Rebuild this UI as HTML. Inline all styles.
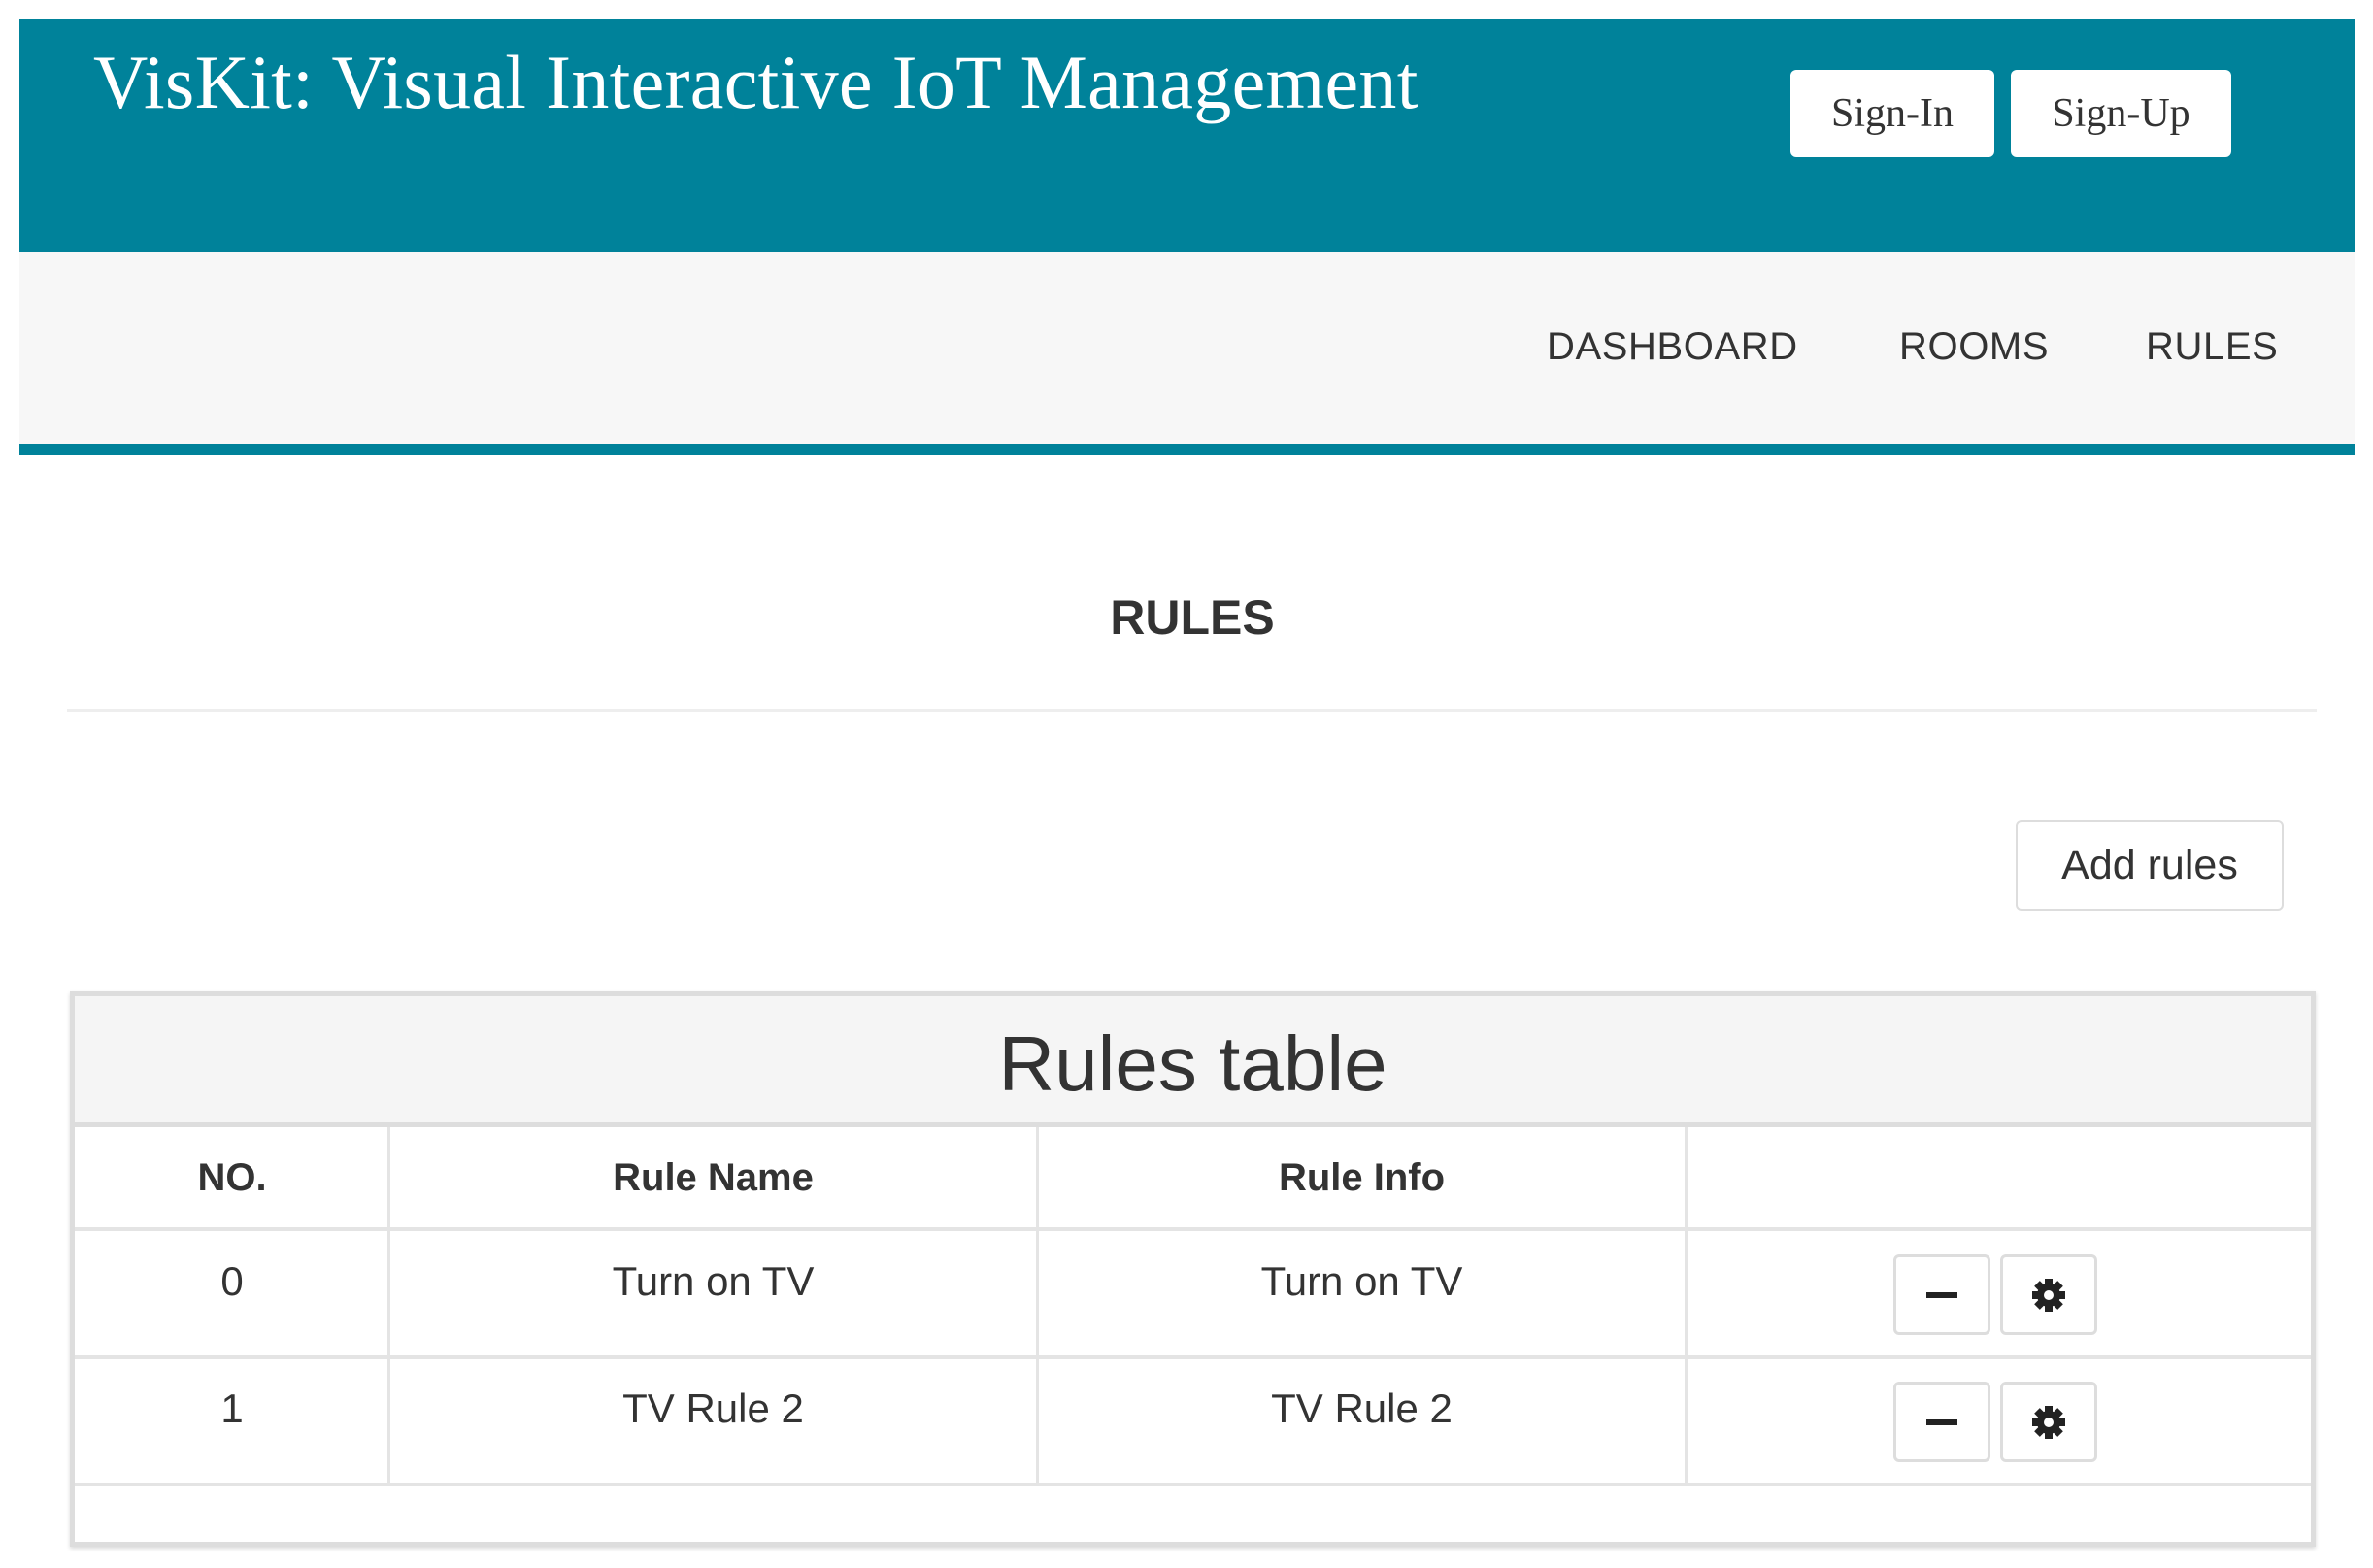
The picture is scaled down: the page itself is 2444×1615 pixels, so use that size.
<!DOCTYPE html>
<html><head><meta charset="utf-8"><style>
*{margin:0;padding:0;box-sizing:border-box}
body{width:2444px;height:1615px;background:#fff;position:relative;overflow:hidden;font-family:"Liberation Sans",sans-serif;color:#333}
.a{position:absolute}
.hdr{left:20px;top:20px;width:2405px;height:240px;background:#00829a}
.title{left:96px;top:40px;font-family:"Liberation Serif",serif;font-size:78px;color:#fff;white-space:nowrap;letter-spacing:0.3px}
.sbtn{background:#fff;border-radius:6px;font-family:"Liberation Serif",serif;font-size:42px;color:#333;display:flex;align-items:center;justify-content:center;top:72px;height:90px}
.nav{left:20px;top:260px;width:2405px;height:197px;background:#f7f7f7}
.navt{top:335px;font-size:40px;color:#333;letter-spacing:0.6px}
.line{left:20px;top:457px;width:2405px;height:12px;background:#00829a}
.h{left:0;width:2456px;text-align:center;top:607px;font-size:50px;font-weight:bold;color:#333}
.hr{left:69px;top:730px;width:2317px;height:3px;background:#eee}
.add{left:2076px;top:845px;width:276px;height:93px;border:2px solid #ddd;border-radius:6px;font-size:43px;display:flex;align-items:center;justify-content:center;color:#333}
.panel{left:72px;top:1021px;width:2313px;height:572px;border:5px solid #ddd;box-shadow:0 2px 4px rgba(0,0,0,.15);background:#fff}
.ph{left:77px;top:1026px;width:2303px;height:135px;background:#f5f5f5;border-bottom:5px solid #ddd;text-align:center;font-size:80px;line-height:140px;color:#333}
.vl{width:3px;background:#e4e4e4;top:1161px;height:368px}
.hl{left:77px;width:2303px;height:4px;background:#e4e4e4}
.c{font-size:42px;text-align:center;color:#333}
.b{font-weight:bold;font-size:40px}
.ib{width:100px;height:83px;border:3px solid #ddd;border-radius:6px;background:#fff;display:flex;align-items:center;justify-content:center}
</style></head><body>
<div class="a hdr"></div>
<div class="a title">VisKit: Visual Interactive IoT Management</div>
<div class="a sbtn" style="left:1844px;width:210px">Sign-In</div>
<div class="a sbtn" style="left:2071px;width:227px">Sign-Up</div>
<div class="a nav"></div>
<div class="a navt" style="left:1593px">DASHBOARD</div>
<div class="a navt" style="left:1956px">ROOMS</div>
<div class="a navt" style="left:2210px">RULES</div>
<div class="a line"></div>
<div class="a h">RULES</div>
<div class="a hr"></div>
<div class="a add">Add rules</div>
<div class="a panel"></div>
<div class="a ph">Rules table</div>
<div class="a vl" style="left:399px"></div>
<div class="a vl" style="left:1067px"></div>
<div class="a vl" style="left:1735px"></div>
<div class="a hl" style="top:1264px"></div>
<div class="a hl" style="top:1396px"></div>
<div class="a hl" style="top:1527px"></div>
<div class="a c b" style="left:78px;width:322px;top:1191px">NO.</div>
<div class="a c b" style="left:401px;width:667px;top:1191px">Rule Name</div>
<div class="a c b" style="left:1069px;width:667px;top:1191px">Rule Info</div>
<div class="a c" style="left:78px;width:322px;top:1296px">0</div>
<div class="a c" style="left:401px;width:667px;top:1296px">Turn on TV</div>
<div class="a c" style="left:1069px;width:667px;top:1296px">Turn on TV</div>
<div class="a c" style="left:78px;width:322px;top:1427px">1</div>
<div class="a c" style="left:401px;width:667px;top:1427px">TV Rule 2</div>
<div class="a c" style="left:1069px;width:667px;top:1427px">TV Rule 2</div>
<div class="a ib" style="left:1950px;top:1292px"><div style="width:32px;height:6px;background:#222"></div></div>
<div class="a ib" style="left:2060px;top:1292px"><svg width="36" height="36" viewBox="-18 -18 36 36"><g fill="#222"><circle r="12"/><rect x="-4" y="-17" width="8" height="34"/><rect x="-17" y="-4" width="34" height="8"/><rect x="-4" y="-17" width="8" height="34" transform="rotate(45)"/><rect x="-4" y="-17" width="8" height="34" transform="rotate(-45)"/></g><circle r="5" fill="#fff"/></svg></div>
<div class="a ib" style="left:1950px;top:1423px"><div style="width:32px;height:6px;background:#222"></div></div>
<div class="a ib" style="left:2060px;top:1423px"><svg width="36" height="36" viewBox="-18 -18 36 36"><g fill="#222"><circle r="12"/><rect x="-4" y="-17" width="8" height="34"/><rect x="-17" y="-4" width="34" height="8"/><rect x="-4" y="-17" width="8" height="34" transform="rotate(45)"/><rect x="-4" y="-17" width="8" height="34" transform="rotate(-45)"/></g><circle r="5" fill="#fff"/></svg></div>
</body></html>
